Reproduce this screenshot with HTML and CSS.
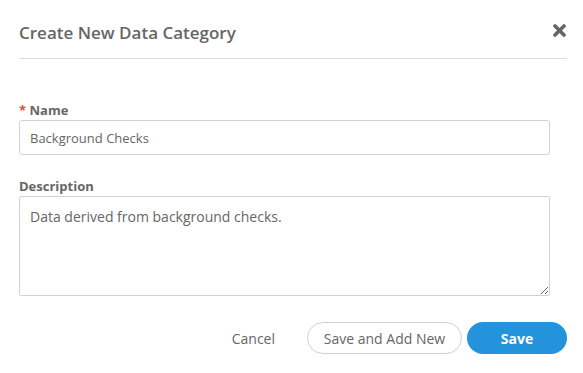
FILE: index.html
```html
<!DOCTYPE html>
<html>
<head>
<meta charset="utf-8">
<link rel="stylesheet" href="styles.css">
</head>
<body>
<div class="modal">
  <div class="modal-header">
    <h2 class="modal-title">Create New Data Category</h2>
    <button class="close" aria-label="Close">
      <svg width="13" height="13" viewBox="0 0 13 13"><path d="M2 2 L11 11 M11 2 L2 11" stroke="#666" stroke-width="3.6" stroke-linecap="round"/></svg>
    </button>
  </div>
  <div class="modal-body">
    <label class="field-label"><span class="req">*</span> Name</label>
    <input class="text-input" type="text" value="Background Checks">
    <label class="field-label desc-label">Description</label>
    <textarea class="text-area">Data derived from background checks.</textarea>
  </div>
  <div class="modal-footer">
    <button class="btn btn-link">Cancel</button>
    <button class="btn btn-outline">Save and Add New</button>
    <button class="btn btn-primary">Save</button>
  </div>
</div>
</body>
</html>
```
FILE: styles.css
```css
html, body {
  margin: 0;
  padding: 0;
  background: #fff;
  font-family: "Open Sans", "Liberation Sans", sans-serif;
  color: #666;
}
.modal {
  padding: 0 16px 0 19px;
}
.modal-header {
  display: flex;
  align-items: center;
  justify-content: space-between;
  height: 58px;
  border-bottom: 1px solid #dcdcdc;
}
.modal-title {
  margin: 0;
  padding-top: 6px;
  font-size: 17px;
  font-weight: 600;
  color: #666;
}
.close {
  border: 0;
  background: none;
  padding: 0;
  margin-right: 1px;
  margin-top: 3px;
  width: 13px;
  height: 13px;
  display: flex;
}
.modal-body {
  display: flex;
  flex-direction: column;
  padding-top: 42px;
  padding-right: 17px;
}
.field-label {
  display: block;
  font-size: 13px;
  font-weight: 700;
  line-height: 18px;
  color: #666;
  margin-bottom: 1px;
}
.req {
  color: #e8473e;
}
.desc-label {
  margin-top: 22px;
}
.text-input {
  box-sizing: border-box;
  height: 35px;
  border: 1px solid #d2d2d2;
  border-radius: 3px;
  padding: 0 10px;
  font-family: inherit;
  font-size: 13px;
  color: #666;
  outline: none;
}
.text-area {
  box-sizing: border-box;
  height: 100px;
  border: 1px solid #d2d2d2;
  border-radius: 2px;
  padding: 8px 10px;
  font-family: inherit;
  font-size: 14px;
  line-height: 24px;
  color: #666;
  resize: both;
  outline: none;
}
.modal-footer {
  display: flex;
  justify-content: flex-end;
  align-items: center;
  gap: 5px;
  margin-top: 26px;
}
.btn {
  font-family: inherit;
  font-size: 14px;
  height: 32px;
  border-radius: 16px;
  cursor: pointer;
}
.btn-link {
  border: 0;
  background: none;
  color: #666;
  padding: 0 16px;
  margin-right: 11px;
}
.btn-outline {
  border: 1px solid #d2d2d2;
  background: #fff;
  color: #666;
  width: 155px;
  padding: 0;
}
.btn-primary {
  border: 0;
  background: #2393dc;
  color: #fff;
  font-weight: 700;
  width: 100px;
  padding: 0;
}
```
